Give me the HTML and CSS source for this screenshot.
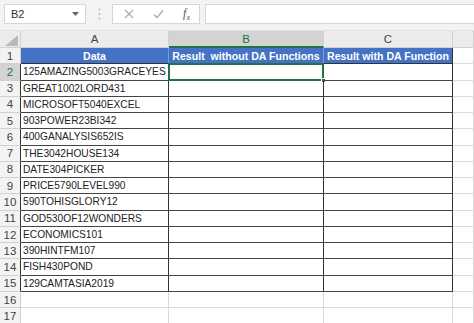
FILE: index.html
```html
<!DOCTYPE html>
<html lang="en">
  <head>
    <meta charset="UTF-8" />
    <meta name="viewport" content="width=device-width, initial-scale=1.0" />
    <title>Book1 - Excel</title>
    <link rel="stylesheet" href="styles.css">
  </head>
  <body>
    <div class="toolbar">
      <div class="name-box">
        <span>B2</span>
        <svg class="drop" width="7" height="4" viewBox="0 0 7 4"><polygon points="0,0 7,0 3.5,4" fill="#666" /></svg>
      </div>
      <div class="grip">
        <svg width="3" height="12" viewBox="0 0 3 12">
          <circle cx="1.5" cy="1.5" r="1" fill="#bbb" />
          <circle cx="1.5" cy="6" r="1" fill="#bbb" />
          <circle cx="1.5" cy="10.5" r="1" fill="#bbb" />
        </svg>
      </div>
      <div class="fx-box">
        <svg width="10" height="10" viewBox="0 0 10 10"><path d="M1 1 L9 9 M9 1 L1 9" stroke="#aaa" stroke-width="1.2" fill="none" /></svg>
        <svg width="11" height="10" viewBox="0 0 11 10"><path d="M1 5.5 L4 8.5 L10 1.5" stroke="#aaa" stroke-width="1.3" fill="none" /></svg>
        <span class="fx">f<sub>x</sub></span>
      </div>
      <div class="formula"></div>
    </div>

    <div class="sheet" id="sheet">
      <div class="corner">
        <svg width="13" height="11" viewBox="0 0 13 11"><polygon points="13,0 13,11 0,11" fill="#b9b9b9" /></svg>
      </div>
      <div class="col-head">A</div>
      <div class="col-head active">B</div>
      <div class="col-head">C</div>
      <div class="col-head"></div>
    </div>

    <script>
      const values = [
        "125AMAZING5003GRACEYES",
        "GREAT1002LORD431",
        "MICROSOFT5040EXCEL",
        "903POWER23BI342",
        "400GANALYSIS652IS",
        "THE3042HOUSE134",
        "DATE304PICKER",
        "PRICE5790LEVEL990",
        "590TOHISGLORY12",
        "GOD530OF12WONDERS",
        "ECONOMICS101",
        "390HINTFM107",
        "FISH430POND",
        "129CAMTASIA2019"
      ];

      const sheet = document.getElementById("sheet");

      function addCell(cls, text) {
        const cell = document.createElement("div");
        cell.className = cls;
        cell.textContent = text || "";
        sheet.appendChild(cell);
        return cell;
      }

      // header row
      addCell("row-head", "1");
      addCell("cell head", "Data");
      addCell("cell head", "Result  without DA Functions");
      addCell("cell head last", "Result with DA Function");
      addCell("cell", "");

      values.forEach((value, i) => {
        const row = i + 2;
        addCell(row === 2 ? "row-head active data" : "row-head data", row);
        addCell("cell data", value);
        addCell(row === 2 ? "cell data selected" : "cell data", "");
        addCell("cell data last", "");
        addCell("cell", "");
      });

      [16, 17].forEach((row) => {
        addCell("row-head", row);
        addCell("cell", "");
        addCell("cell", "");
        addCell("cell", "");
        addCell("cell", "");
      });
    </script>
  </body>
</html>
```

FILE: styles.css
```css
body {
  margin: 0;
  width: 474px;
  height: 323px;
  overflow: hidden;
  background: #fff;
  font-family: "Liberation Sans", Arial, sans-serif;
  color: #222;
}
.toolbar {
  display: flex;
  align-items: flex-start;
  height: 31px;
  padding: 4px 0 0 4px;
  box-sizing: border-box;
  background: #f3f3f3;
  border-bottom: 1px solid #e2e2e2;
}
.name-box {
  width: 82px;
  height: 20px;
  box-sizing: border-box;
  display: flex;
  align-items: center;
  justify-content: space-between;
  padding: 0 6px 0 6px;
  background: #fff;
  border: 1px solid #d6d6d6;
  font-size: 11px;
  color: #333;
}
.grip {
  width: 26px;
  height: 20px;
  display: flex;
  align-items: center;
  justify-content: center;
}
.fx-box {
  width: 88px;
  height: 20px;
  box-sizing: border-box;
  display: flex;
  align-items: center;
  justify-content: space-between;
  padding: 0 9px 0 11px;
  background: #fff;
  border: 1px solid #d6d6d6;
}
.fx {
  font-family: "Liberation Serif", serif;
  font-style: italic;
  font-size: 12px;
  color: #555;
}
.fx sub {
  font-size: 8px;
}
.formula {
  flex: 1;
  height: 20px;
  margin-left: 5px;
  box-sizing: border-box;
  background: #fff;
  border: 1px solid #d6d6d6;
  border-right: none;
}
.sheet {
  display: grid;
  grid-template-columns: 21px 148px 155px 129px 1fr;
  grid-template-rows: 17px;
  grid-auto-rows: 16.27px;
}
.corner,
.col-head,
.row-head {
  background: #ececec;
  border-right: 1px solid #d0d0d0;
  border-bottom: 1px solid #d0d0d0;
  box-sizing: border-box;
  font-size: 11.5px;
  color: #444;
}
.corner {
  display: flex;
  align-items: flex-end;
  justify-content: flex-end;
  padding: 0 2px 1px 0;
}
.col-head {
  display: flex;
  align-items: center;
  justify-content: center;
}
.col-head.active {
  background: #d3d3d3;
  color: #217346;
  border-bottom: 2px solid #217346;
}
.row-head {
  display: flex;
  align-items: center;
  justify-content: center;
  background: #f3f3f3;
}
.row-head.data {
  border-right-color: #333;
}
.row-head.active {
  background: #d3d3d3;
  color: #217346;
}
.cell {
  box-sizing: border-box;
  border-right: 1px solid #dadada;
  border-bottom: 1px solid #dadada;
  font-size: 10.2px;
  line-height: 16px;
  padding-left: 2px;
  white-space: nowrap;
  overflow: hidden;
  position: relative;
}
.cell.head {
  background: #4472c4;
  color: #fff;
  font-weight: bold;
  font-size: 10.6px;
  text-align: center;
  padding-left: 0;
  white-space: pre;
  border-right-color: #7b9bd6;
  border-bottom-color: #333;
}
.cell.head.last {
  border-right-color: #333;
}
.cell.data {
  border-right-color: #333;
  border-bottom-color: #444;
}
.cell.selected {
  overflow: visible;
}
.cell.selected::before {
  content: "";
  position: absolute;
  left: -1px;
  top: -1px;
  right: -1px;
  bottom: -1px;
  border: 2px solid #217346;
}
.cell.selected::after {
  content: "";
  position: absolute;
  right: -3px;
  bottom: -3px;
  width: 5px;
  height: 5px;
  background: #217346;
  border: 1px solid #fff;
  box-sizing: border-box;
}
```
